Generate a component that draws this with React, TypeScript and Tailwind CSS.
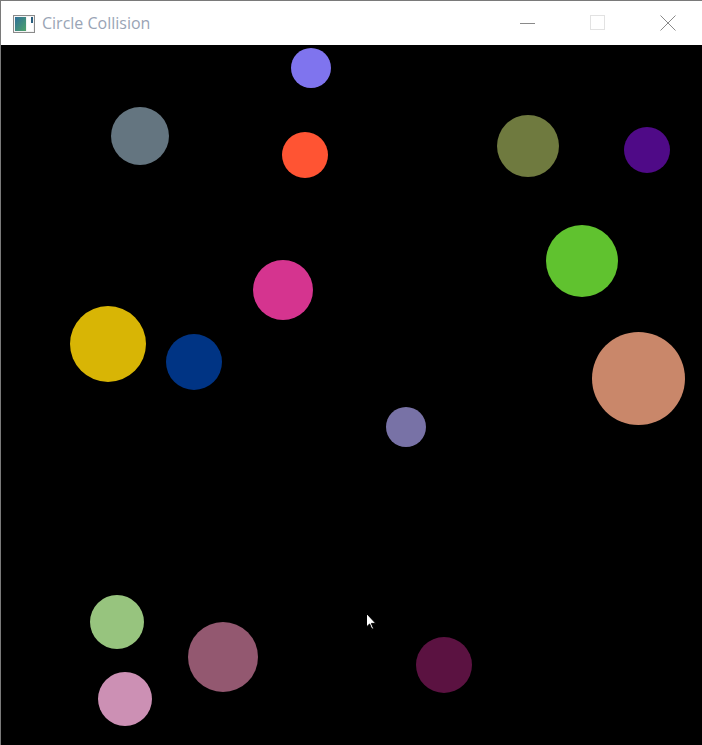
import React from "react";

type Ball = { x: number; y: number; r: number; color: string };

const balls: Ball[] = [
  { x: 311, y: 68, r: 20, color: "#7f74ee" },
  { x: 140, y: 136, r: 29, color: "#647580" },
  { x: 305, y: 155, r: 23, color: "#ff5433" },
  { x: 528, y: 146, r: 31, color: "#6f7a3f" },
  { x: 647, y: 150, r: 23, color: "#4f0a87" },
  { x: 582, y: 261, r: 36, color: "#60c22f" },
  { x: 283, y: 290, r: 30, color: "#d5348f" },
  { x: 108, y: 343.5, r: 38, color: "#d8b505" },
  { x: 194, y: 362, r: 28, color: "#003484" },
  { x: 638.5, y: 378, r: 46.5, color: "#c9876a" },
  { x: 406, y: 427, r: 20, color: "#7872a6" },
  { x: 117, y: 622, r: 27, color: "#97c47e" },
  { x: 223, y: 657, r: 35, color: "#935870" },
  { x: 444, y: 665, r: 28, color: "#5b1241" },
  { x: 125, y: 699, r: 27, color: "#cc90b4" },
];

const AppIcon = () => (
  <svg width="22" height="18" viewBox="0 0 22 18">
    <defs>
      <linearGradient id="ig" x1="0" y1="0" x2="1" y2="1">
        <stop offset="0" stopColor="#2f6f9a" />
        <stop offset="1" stopColor="#4fa36a" />
      </linearGradient>
    </defs>
    <rect x="0.5" y="0.5" width="21" height="17" fill="#f4f4f4" stroke="#8a8a8a" />
    <rect x="2" y="2" width="11" height="14" fill="url(#ig)" />
    <rect x="14" y="2" width="6" height="14" fill="#ffffff" />
    <rect x="18" y="2" width="2" height="6" fill="#2a5f7f" />
  </svg>
);

const TitleBar = () => (
  <div className="flex h-[44px] shrink-0 items-center bg-white">
    <div className="ml-[12px] mt-[1px] flex items-center">
      <AppIcon />
    </div>
    <span
      className="ml-[7px] text-[16px] text-[#99a4b5]"
      style={{ fontFamily: '"Open Sans", "Noto Sans", sans-serif' }}
    >
      Circle Collision
    </span>
    <div className="ml-auto flex h-full items-center">
      <div className="flex w-[46px] justify-center">
        <svg width="16" height="16" viewBox="0 0 16 16">
          <line x1="0" y1="8.5" x2="15" y2="8.5" stroke="#8a8a8a" strokeWidth="1" />
        </svg>
      </div>
      <div className="ml-[24px] flex w-[46px] justify-center">
        <svg width="16" height="16" viewBox="0 0 16 16">
          <rect x="0.5" y="0.5" width="14" height="14" fill="none" stroke="#e2e2e2" />
        </svg>
      </div>
      <div className="ml-[24px] mr-[11px] flex w-[46px] justify-center">
        <svg width="16" height="16" viewBox="0 0 16 16">
          <path d="M0.5 0.5 L15.5 15.5 M15.5 0.5 L0.5 15.5" stroke="#8a8a8a" strokeWidth="1" />
        </svg>
      </div>
    </div>
  </div>
);

const Cursor = () => (
  <svg width="12" height="18" viewBox="0 0 12 18" className="absolute left-[365px] top-[568px]">
    <path
      d="M0.5 0.5 L0.5 14 L3.6 11 L5.8 16.2 L7.6 15.4 L5.4 10.4 L9.8 10.4 Z"
      fill="#ffffff"
      stroke="#000000"
      strokeWidth="1"
    />
  </svg>
);

export default function App() {
  return (
    <div className="flex h-[745px] w-[702px] flex-col overflow-hidden border-l border-t border-[#7a7a7a] bg-black">
      <TitleBar />
      <div className="relative flex-1 bg-black">
        {balls.map((b, i) => (
          <div
            key={i}
            className="absolute rounded-full"
            style={{
              left: b.x - b.r - 1,
              top: b.y - b.r - 45,
              width: b.r * 2,
              height: b.r * 2,
              backgroundColor: b.color,
            }}
          />
        ))}
        <Cursor />
      </div>
    </div>
  );
}
